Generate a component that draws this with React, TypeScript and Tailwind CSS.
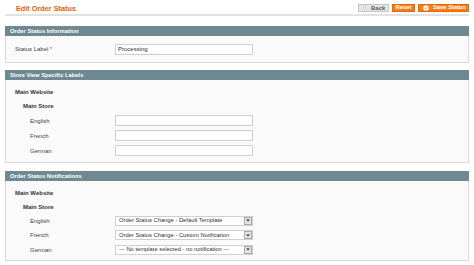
import React from "react";

const LANGS = ["English", "French", "German"];

const TEMPLATES = [
  "Order Status Change - Default Template",
  "Order Status Change - Custom Notification",
  "--- No template selected - no notification ---",
];

function SectionHead({ title }: { title: string }) {
  return (
    <div className="h-[10px] bg-[#6f8992] pl-[5px] text-[5.8px] font-bold leading-[10px] text-white">
      {title}
    </div>
  );
}

function TextBox({ value = "" }: { value?: string }) {
  return (
    <div className="h-[10.5px] w-[138px] border border-[#cfcfcf] bg-white pl-[2px] text-[6px] leading-[9px] text-[#2f2f2f]">
      {value}
    </div>
  );
}

function SelectBox({ value }: { value: string }) {
  return (
    <div className="flex h-[10px] w-[138px] items-center border border-[#cfcfcf] bg-white">
      <span className="flex-1 truncate pl-[3px] text-[5.8px] leading-[9px] text-[#2f2f2f]">{value}</span>
      <span className="mr-[0.5px] flex h-[8px] w-[8px] items-center justify-center border border-[#a9a9a9] bg-[#e4e4e4]">
        <svg width="4" height="3" viewBox="0 0 4 3">
          <path d="M0 0.5 L4 0.5 L2 2.6 Z" fill="#333" />
        </svg>
      </span>
    </div>
  );
}

function Row({ label, h, children }: { label: React.ReactNode; h: string; children?: React.ReactNode }) {
  return (
    <div className={`flex items-center ${h}`}>
      <div className="w-[100px] shrink-0 text-[6px] leading-[8px] text-[#444]">{label}</div>
      {children}
    </div>
  );
}

export default function App() {
  return (
    <div className="h-[265px] w-[474px] overflow-hidden bg-white font-['Liberation_Sans',Arial,sans-serif]">
      {/* title bar */}
      <div className="mx-[5px] flex h-[16px] items-center justify-between border-b-2 border-[#e2e2e2] pt-[1px]">
        <h3 className="pl-[11px] pt-[4px] text-[7.3px] font-bold text-[#eb5e00]">Edit Order Status</h3>
        <div className="flex items-center gap-[3px]">
          <button className="flex h-[8px] w-[31px] items-center gap-[3px] border border-[#c4c4c4] bg-[#e6e6e6] pl-[4px] text-[6px] font-bold leading-none text-[#5a5a5a]">
            <svg width="5" height="5" viewBox="0 0 10 10">
              <circle cx="5" cy="5" r="4.5" fill="#fff" stroke="#bbb" />
              <path d="M6 3 L3.5 5 L6 7" stroke="#777" strokeWidth="1.4" fill="none" />
            </svg>
            Back
          </button>
          <button className="flex h-[8px] w-[23px] items-center justify-center border border-[#ed6502] bg-[#f47f1a] text-[5.8px] font-bold leading-none text-white">
            Reset
          </button>
          <button className="flex h-[8px] w-[51px] items-center gap-[4px] border border-[#ed6502] bg-[#f47f1a] pl-[4px] text-[5.8px] font-bold leading-none text-white">
            <svg width="6" height="6" viewBox="0 0 10 10">
              <circle cx="5" cy="5" r="4.6" fill="#fff" />
              <path d="M2.8 5.2 L4.4 6.7 L7.3 3.5" stroke="#f47f1a" strokeWidth="1.5" fill="none" />
            </svg>
            Save Status
          </button>
        </div>
      </div>

      <div className="mx-[5px] mt-[10px] flex flex-col gap-[7.5px]">
        {/* Order Status Information */}
        <div>
          <SectionHead title="Order Status Information" />
          <div className="border border-t-0 border-[#d9d9d9] bg-[#fafafa] pb-[7px] pl-[9px] pt-[8px]">
            <Row label={<>Status Label <span className="text-[#eb340a]">*</span></>} h="h-[10.5px]">
              <TextBox value="Processing" />
            </Row>
          </div>
        </div>

        {/* Store View Specific Labels */}
        <div>
          <SectionHead title="Store View Specific Labels" />
          <div className="border border-t-0 border-[#d9d9d9] bg-[#fafafa] pb-[4px] pl-[9px] pt-[6px]">
            <div className="h-[13px] text-[6px] font-bold leading-[13px] text-[#333]">Main Website</div>
            <div className="h-[14px] pl-[8px] text-[6px] font-bold leading-[14px] text-[#333]">Main Store</div>
            {LANGS.map((l) => (
              <Row key={l} label={<span className="pl-[15px]">{l}</span>} h="h-[15px]">
                <TextBox />
              </Row>
            ))}
          </div>
        </div>

        {/* Order Status Notifications */}
        <div>
          <SectionHead title="Order Status Notifications" />
          <div className="border border-t-0 border-[#d9d9d9] bg-[#fafafa] pb-[3px] pl-[9px] pt-[6px]">
            <div className="h-[13px] text-[6px] font-bold leading-[13px] text-[#333]">Main Website</div>
            <div className="h-[14px] pl-[8px] text-[6px] font-bold leading-[14px] text-[#333]">Main Store</div>
            {LANGS.map((l, i) => (
              <Row key={l} label={<span className="pl-[15px]">{l}</span>} h="h-[14.5px]">
                <SelectBox value={TEMPLATES[i]} />
              </Row>
            ))}
          </div>
        </div>
      </div>
    </div>
  );
}
